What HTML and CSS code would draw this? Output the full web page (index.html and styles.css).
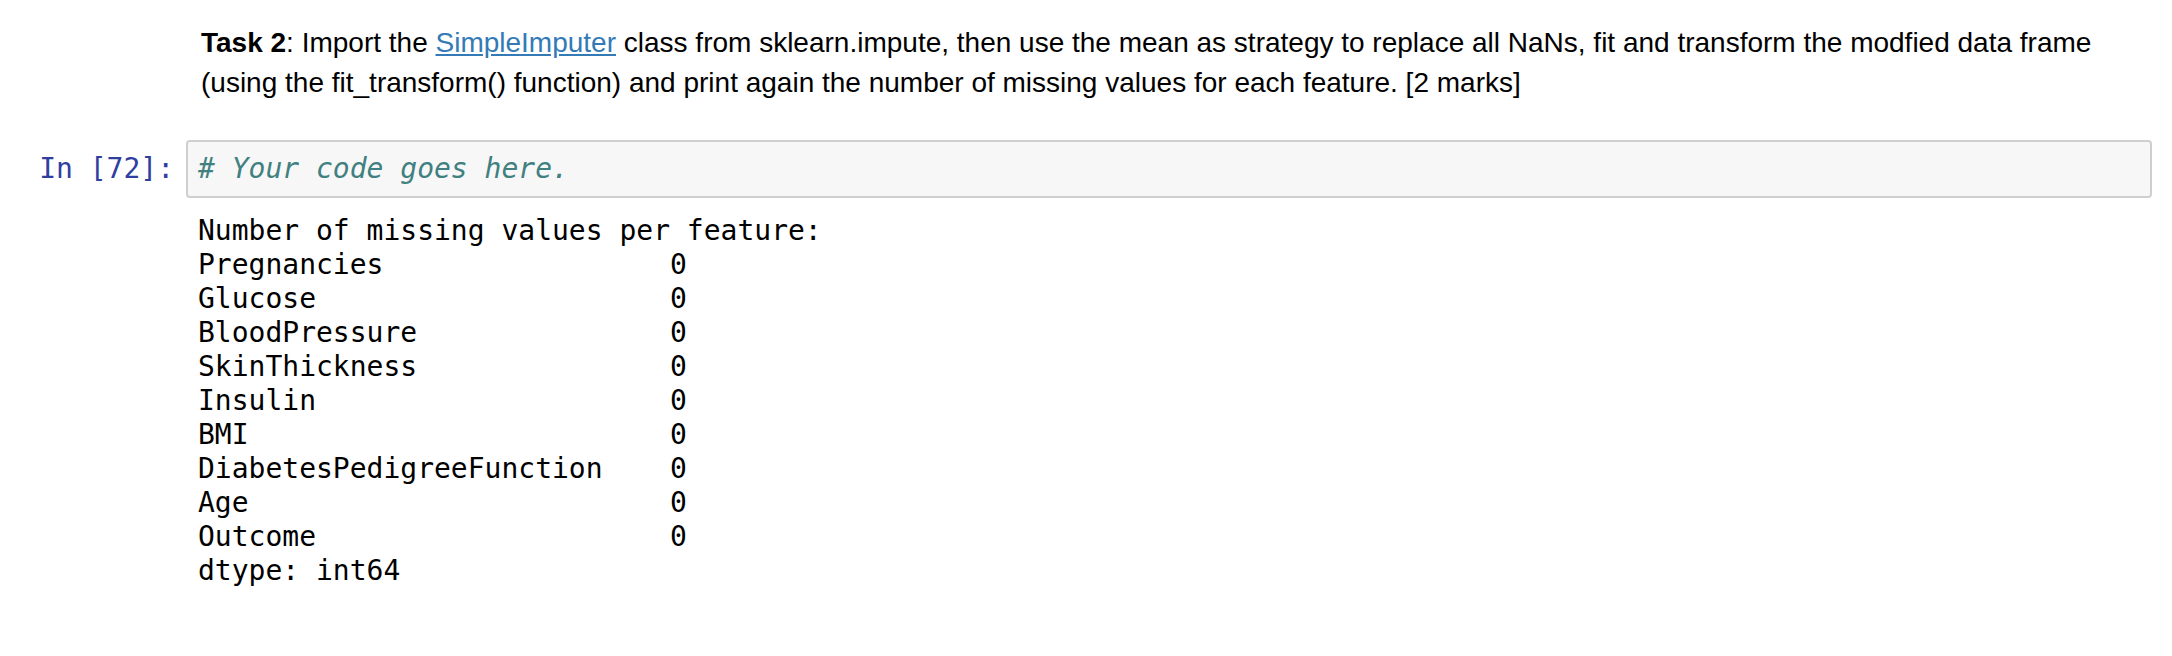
FILE: index.html
```html
<!DOCTYPE html>
<html lang="en">
<head>
<meta charset="utf-8">
<title>Notebook</title>
<link rel="stylesheet" href="styles.css">
</head>
<body>
<div class="notebook">
  <div class="cell text-cell">
    <div class="prompt"></div>
    <div class="rendered">
      <p><strong>Task 2</strong>: Import the <a href="#">SimpleImputer</a> class from sklearn.impute, then use the mean as strategy to replace all NaNs, fit and transform the modfied data frame (using the fit_transform() function) and print again the number of missing values for each feature. [2 marks]</p>
    </div>
  </div>
  <div class="cell code-cell">
    <div class="prompt input-prompt">In&nbsp;[72]:</div>
    <div class="input-area"><span class="cm-comment"># Your code goes here.</span></div>
  </div>
  <div class="cell output-cell">
    <div class="prompt"></div>
<pre class="output">Number of missing values per feature:
Pregnancies                 0
Glucose                     0
BloodPressure               0
SkinThickness               0
Insulin                     0
BMI                         0
DiabetesPedigreeFunction    0
Age                         0
Outcome                     0
dtype: int64</pre>
  </div>
</div>
</body>
</html>
```

FILE: styles.css
```css
html, body {
  margin: 0;
  padding: 0;
  background: #ffffff;
}

.notebook {
  padding: 23px 20px 0 0;
}

.cell {
  display: flex;
  align-items: flex-start;
}

.prompt {
  flex: 0 0 186px;
  box-sizing: border-box;
  text-align: right;
  padding-right: 10px;
  font-family: "DejaVu Sans Mono", monospace;
  font-size: 28px;
  line-height: 34px;
}

.rendered {
  flex: 1;
  padding-left: 15px;
  font-family: "Liberation Sans", Arial, sans-serif;
  font-size: 28px;
  line-height: 40px;
  color: #000000;
}

.rendered p {
  margin: 0;
}

.rendered strong {
  font-weight: bold;
}

.rendered a {
  color: #337ab7;
  text-decoration: underline;
}

.code-cell {
  margin-top: 37px;
}

.input-prompt {
  color: #303f9f;
  padding-top: 12px;
  padding-right: 12px;
}

.input-area {
  flex: 1;
  border: 2px solid #cfcfcf;
  border-radius: 4px;
  background: #f7f7f7;
  padding: 10px 10px;
  font-family: "DejaVu Sans Mono", monospace;
  font-size: 28px;
  line-height: 34px;
}

.cm-comment {
  color: #408080;
  font-style: italic;
}

.output-cell {
  margin-top: 16px;
}

.output {
  margin: 0;
  padding-left: 12px;
  font-family: "DejaVu Sans Mono", monospace;
  font-size: 28px;
  line-height: 34px;
  color: #000000;
}
```
